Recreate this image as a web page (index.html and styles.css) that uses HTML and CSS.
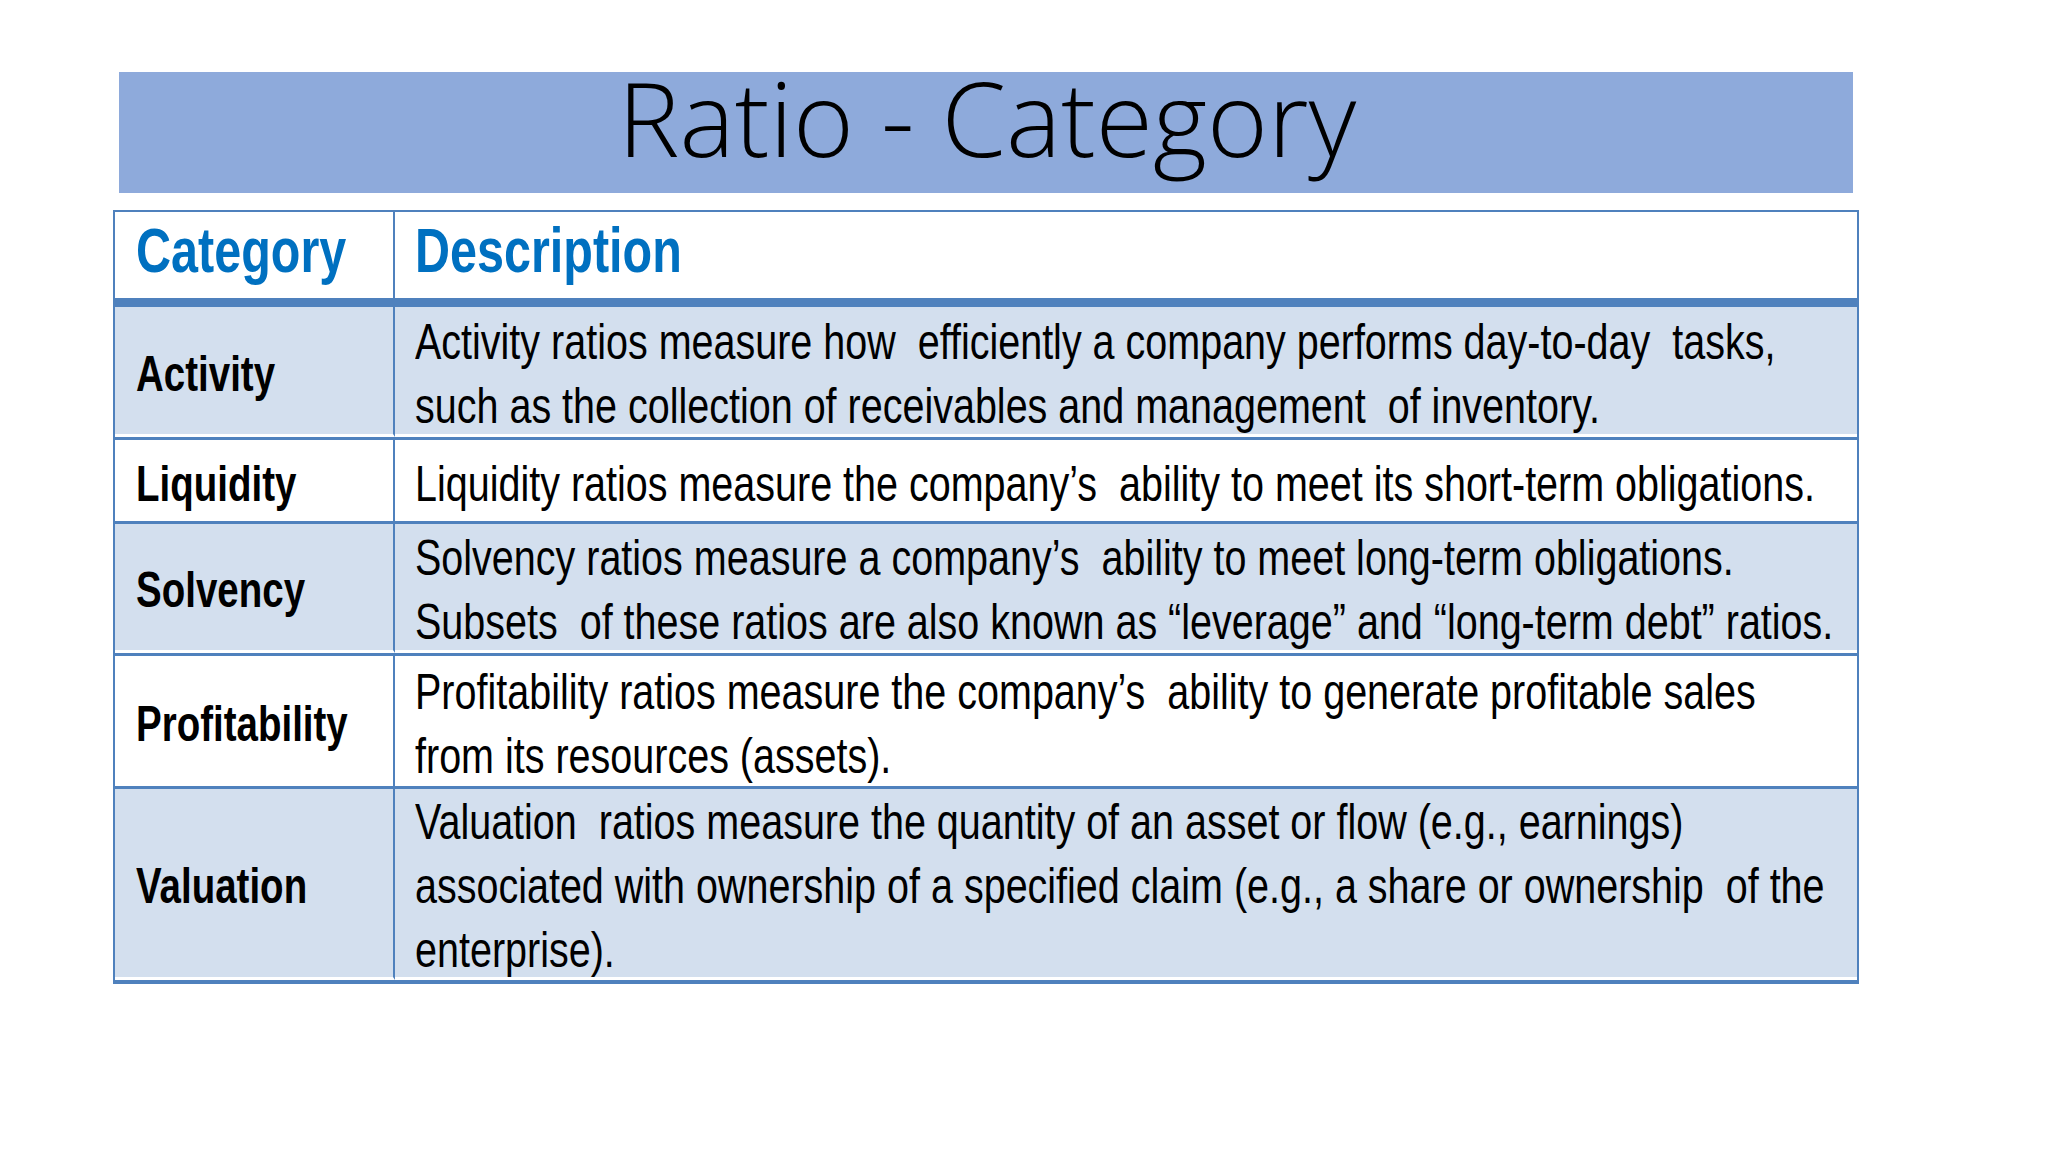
FILE: index.html
```html
<!DOCTYPE html>
<html lang="en">
<head>
<meta charset="utf-8">
<title>Ratio - Category</title>
<link rel="stylesheet" href="styles.css">
</head>
<body>
<div class="slide">
  <h1 class="title">Ratio - Category</h1>
  <div class="tbl">
    <div class="cell c1 hd"><span class="sx b">Category</span></div>
    <div class="cell c2 hd"><span class="sx b">Description</span></div>

    <div class="cell c1 light lbl"><span class="sx b">Activity</span></div>
    <div class="cell c2 light desc"><span class="sx r">Activity ratios measure how  efficiently a company performs day-to-day  tasks,<br>such as the collection of receivables and management  of inventory.</span></div>

    <div class="cell c1 sep lbl"><span class="sx b">Liquidity</span></div>
    <div class="cell c2 sep desc"><span class="sx r">Liquidity ratios measure the company’s  ability to meet its short-term obligations.</span></div>

    <div class="cell c1 sep light lbl"><span class="sx b">Solvency</span></div>
    <div class="cell c2 sep light desc"><span class="sx r">Solvency ratios measure a company’s  ability to meet long-term obligations.<br>Subsets  of these ratios are also known as “leverage” and “long-term debt” ratios.</span></div>

    <div class="cell c1 sep lbl"><span class="sx b">Profitability</span></div>
    <div class="cell c2 sep desc"><span class="sx r">Profitability ratios measure the company’s  ability to generate profitable sales<br>from its resources (assets).</span></div>

    <div class="cell c1 sep light lbl"><span class="sx b">Valuation</span></div>
    <div class="cell c2 sep light desc"><span class="sx r">Valuation  ratios measure the quantity of an asset or flow (e.g., earnings)<br>associated with ownership of a specified claim (e.g., a share or ownership  of the<br>enterprise).</span></div>
  </div>
</div>
</body>
</html>
```

FILE: styles.css
```css
html, body {
  margin: 0;
  padding: 0;
  background: #ffffff;
  overflow: hidden;
}

.slide {
  width: 2048px;
  height: 1152px;
  box-sizing: border-box;
  padding: 72px 0 0 113px;
}

.title {
  margin: 0 0 0 6px;
  width: 1734px;
  height: 121px;
  box-sizing: border-box;
  padding-left: 2px;
  background: #8eaadb;
  color: #000000;
  text-align: center;
  font-family: "Open Sans", "Liberation Sans", sans-serif;
  font-weight: 300;
  font-size: 104px;
  line-height: 90px;
  white-space: nowrap;
}

.tbl {
  margin-top: 17px;
  display: grid;
  grid-template-columns: 280px 1462px;
  grid-template-rows: 95px 130px 84px 132px 133px 194px;
  width: 1746px;
  box-sizing: border-box;
  border: 2px solid #4f81bd;
  border-bottom-width: 4px;
  font-family: "Liberation Sans", Arial, sans-serif;
  color: #000000;
}

.cell {
  box-sizing: border-box;
  display: flex;
  align-items: center;
  min-width: 0;
  background: #ffffff;
  font-size: 50px;
  line-height: 63px;
}

.c1 {
  border-right: 2px solid #4f81bd;
  padding-left: 21px;
}

.c2 {
  padding-left: 20px;
}

.hd {
  align-items: flex-start;
  padding-top: 2px;
  border-bottom: 9px solid #4f81bd;
  font-size: 63px;
  line-height: 72px;
  color: #0070c0;
}

.light {
  background: #d3dfee;
  border-bottom: 3px solid #ffffff;
}

.sep {
  border-top: 3px solid #4f81bd;
}

.lbl {
  padding-top: 7px;
}

.desc {
  padding-top: 6px;
  line-height: 64px;
}

.sx {
  display: inline-block;
  white-space: pre;
  transform-origin: 0 50%;
}

.b {
  font-weight: 700;
  transform: scaleX(0.77);
}

.r {
  font-weight: 400;
  transform: scaleX(0.79);
}
```
